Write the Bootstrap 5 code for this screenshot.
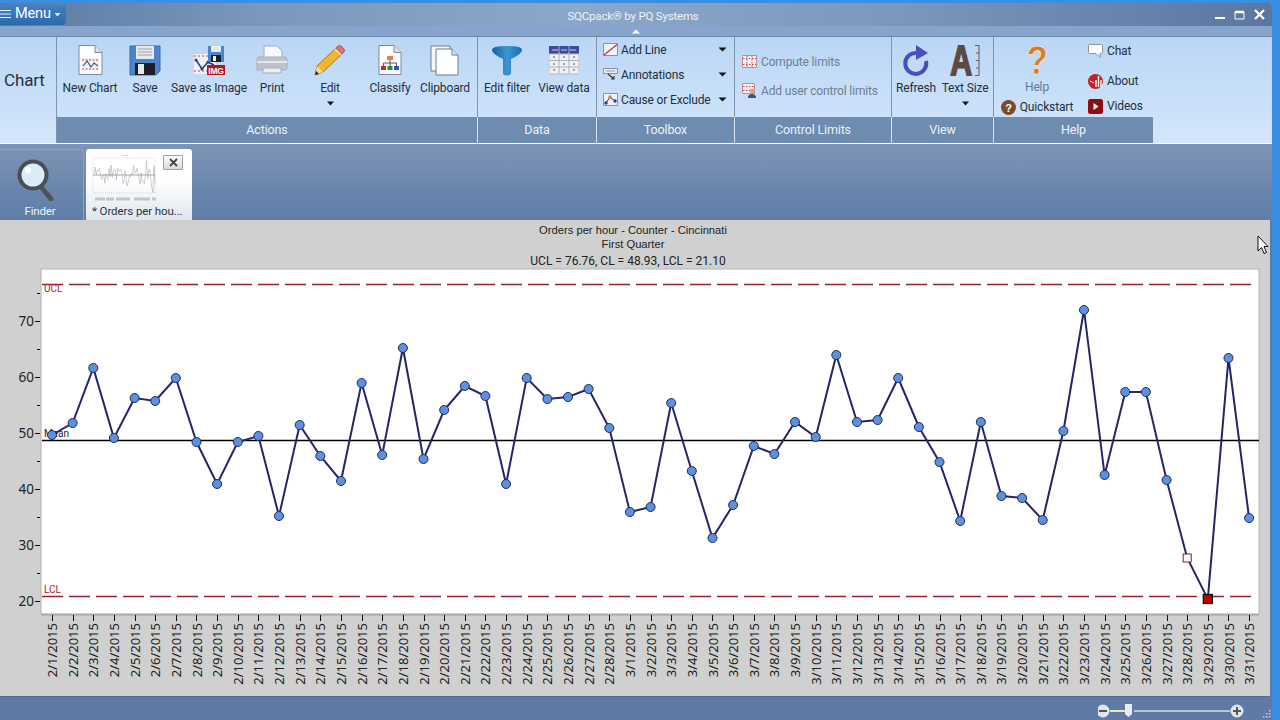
<!DOCTYPE html>
<html lang="en"><head><meta charset="utf-8"><title>SQCpack</title>
<link href="https://cdn.jsdelivr.net/npm/bootstrap@5.3.0/dist/css/bootstrap.min.css" rel="stylesheet">
<style>
html,body{height:720px;overflow:hidden}
body{background:#3b8fe3;font-family:Roboto,"Noto Sans",sans-serif;font-size:12px;letter-spacing:-.15px;color:#22303f;padding-top:3px}
.win{width:1272px;height:717px;border-top-right-radius:5px;overflow:hidden;background:#5f7ba5}
.ttl{height:23px;background:linear-gradient(90deg,#587aa3 0,#7b97bb 20%,#8ba7c9 45%,#7c98bd 70%,#5b76a1 100%);position:relative}
.menu-b{width:66px;height:20px;background:linear-gradient(#3f80c8,#2d6aa8);border-radius:0 0 4px 0;color:#fff;font-size:14.5px;line-height:18px;gap:3px;margin-top:2px;padding-bottom:2px}
.ttl-t{color:#eef4fb;font-size:11.5px;left:0;width:1266px;top:5px;text-align:center;letter-spacing:-.2px}
.wbtns{gap:9px;padding-right:7px}
.strip{height:11px;background:#86a4cc;border-bottom:1px solid #6c86a5;text-align:center;line-height:0}
.rib{height:106px;background:linear-gradient(#bad6f5,#d3e6fb)}
.tabn{width:57px;border-right:1px solid #7e95ad;font-size:17px;line-height:87px;padding-left:4px;color:#26323e}
.grp{border-right:1px solid #7e95ad}
.grp-b{height:80px}
.grp-f{height:26px;background:#6e8cb0;color:#eaf1f8;text-align:center;line-height:26px;font-size:12.5px;border-right:1px solid #d8e3ef;margin-right:-1px}
.g1{width:421px}.g2{width:119px}.g3{width:138px}.g4{width:157px}.g5{width:102px}.g6{width:159px;border-right:0}
.g6 .grp-f{border-right:0;margin-right:0}
.rb{padding-top:8px;height:80px;flex:none}
.rb-i{height:36px;display:block}
.rb-t{line-height:14px;white-space:nowrap}
.car{display:block;margin-top:6px}
.w66{width:66px}.w44{width:44px}.w84{width:84px}.w42{width:42px}.w74{width:74px}.w46{width:46px}.w64{width:64px}.w58{width:58px}.w56{width:56px}.w48{width:48px}.w50{width:50px}
.g3 .grp-b{padding:0 0 0 6px}
.tl{height:25px;gap:3px;white-space:nowrap}
.tl b{font-weight:400;flex:1}
.g4 .tl{height:29px;color:#6d8095;gap:4px}
.g4 .grp-b{padding:10px 0 0 7px}
.hp{color:#5f7a97}
.bigi{overflow:visible}
.tabs{height:77px;background:linear-gradient(#7d94b6,#5f7da7);border-top:1px solid #fff;padding-top:5px;gap:2px}
.tb1{width:84px;border:1px solid #8ea3bf;border-bottom:0;border-left:0;border-radius:0 4px 0 0;color:#edf3fa;position:relative}
.tb2{width:106px;background:linear-gradient(#fff 45%,#dfe5ee);border-radius:3px 3px 0 0;position:relative;color:#2a3542}
.tb-l{position:absolute;bottom:2px;left:-3px;right:0;text-align:center;white-space:nowrap;font-size:11.5px;line-height:14px}
.tb2 .tb-l{text-align:left;left:6px;letter-spacing:-.1px}
.xb{position:absolute;left:77px;top:6px;width:20px;height:15px;border:1px solid #9aa3ad;background:linear-gradient(#fdfdfd,#d7dbe0);border-radius:1px;padding:0;line-height:0}
.view{height:477px;background:#d0d0d0;width:1270px;position:relative;border-bottom:1px solid #54698a;letter-spacing:0}
.stat{height:22px;position:relative}
.sld{position:absolute;left:1098px;top:6px}
.cursor{position:absolute;left:1257px;top:15px}
.chart{display:block}
.ct{font-family:"Liberation Sans",Arial,sans-serif;fill:#222}
.nt{font-family:"Noto Sans",sans-serif}
</style></head><body>
<div class="win d-flex flex-column">
 <div class="ttl d-flex align-items-start justify-content-between flex-shrink-0">
  <div class="menu-b d-flex align-items-center position-relative"><svg width="12" height="12" viewBox="0 0 12 12"><path d="M0 2.500h11M0 6h11M0 9.500h11" stroke="#e6eef8" stroke-width="1"/></svg><span>Menu</span><svg width="7" height="5" viewBox="0 0 7 5"><path d="M.5 1h6L3.500 4.500z" fill="#dfeaf6"/></svg></div>
  <div class="ttl-t position-absolute">SQCpack® by PQ Systems</div>
  <div class="wbtns d-flex align-items-center position-relative" style="height:23px">
   <svg width="10" height="10" viewBox="0 0 10 10"><path d="M0 8h10" stroke="#fff" stroke-width="2"/></svg>
   <svg width="11" height="10" viewBox="0 0 11 10"><path d="M1 2h9v7H1z" fill="none" stroke="#fff"/><path d="M1 2h9" stroke="#fff" stroke-width="2.500"/></svg>
   <svg width="11" height="11" viewBox="0 0 11 11"><path d="M1 1l9 9M10 1l-9 9" stroke="#fff" stroke-width="2.200"/></svg>
  </div>
 </div>
 <div class="strip flex-shrink-0"><svg width="10" height="5" viewBox="0 0 10 5" style="margin-top:3px"><path d="M1 4.500h8L5 .5z" fill="#fff"/></svg></div>
 <div class="rib d-flex flex-shrink-0">
  <div class="tabn">Chart</div>
  <div class="grp g1 d-flex flex-column">
   <div class="grp-b d-flex">
    <div class="rb w66 text-center"><svg class="rb-i mx-auto" width="30" height="36" viewBox="0 0 30 36"><path d="M4 .5h16l7 7v22H4z" fill="#fff" stroke="#7d8a99"/><path d="M20 .5v7h7" fill="#dbe2ea" stroke="#7d8a99"/><path d="M7 13h17v12H7z" fill="#f1f3f7"/><path d="M8 21l4-5 4 6 3-4 4 3" fill="none" stroke="#36558f" stroke-width="1.200"/><path d="M7 15h17M7 24h17" stroke="#c9414c" stroke-dasharray="2 1.500"/></svg><div class="rb-t">New Chart</div></div>
    <div class="rb w44 text-center"><svg class="rb-i mx-auto" width="32" height="36" viewBox="0 0 32 36"><path d="M1 1h30v25l-4 4H1z" fill="#4b84cc" stroke="#3a6aa8"/><path d="M7 1h18v13H7z" fill="#e6e9ee"/><path d="M9 4h14M9 7h14M9 10h14" stroke="#9aa3ad"/><path d="M6 18h20v12H6z" fill="#1e1f24"/><path d="M9 19h6v10H9z" fill="#e6e9ee"/></svg><div class="rb-t">Save</div></div>
    <div class="rb w84 text-center"><svg class="rb-i mx-auto" width="32" height="36" viewBox="0 0 32 36"><path d="M1 9h22v20H1z" fill="#eef1f6"/><path d="M1 11h20M1 26h16" stroke="#c9414c" stroke-dasharray="2 2"/><path d="M3 15l6 9 6-7 6 3" fill="none" stroke="#2b3f7a" stroke-width="1.600"/><circle cx="3" cy="15" r="1.500" fill="#2b3f7a"/><circle cx="9" cy="24" r="1.500" fill="#2b3f7a"/><circle cx="15" cy="17" r="1.500" fill="#2b3f7a"/><path d="M15 1h16v16H15z" fill="#4b84cc"/><path d="M18 1h10v6H18z" fill="#e6e9ee"/><path d="M18 10h10v7H18z" fill="#1e1f24"/><path d="M20 11h3v5h-3z" fill="#fff"/><path d="M14 20h18v10H14z" fill="#b5161e"/><text x="23" y="28.500" text-anchor="middle" font-size="8.500" font-weight="700" fill="#fff" font-family="Liberation Sans">IMG</text></svg><div class="rb-t">Save as Image</div></div>
    <div class="rb w42 text-center"><svg class="rb-i mx-auto" width="32" height="36" viewBox="0 0 32 36"><path d="M8 1h13l5 5v9H8z" fill="#f7f8fa" stroke="#a4adb7"/><path d="M1 14q0-2 2-2h26q2 0 2 2v9q0 2-2 2H1z" fill="#bcc3cb" stroke="#a9b0b9"/><path d="M1 17h30" stroke="#e3e6ea" stroke-width="2"/><path d="M7 23h18v5H7z" fill="#eceef1" stroke="#a4adb7"/></svg><div class="rb-t">Print</div></div>
    <div class="rb w74 text-center"><svg class="rb-i mx-auto" width="32" height="36" viewBox="0 0 32 36"><path d="M24 1l6 6L9 27l-8 3 2-9z" fill="#f2b52d" stroke="#a8781a"/><path d="M21 4l6 6" stroke="#fbe28a" stroke-width="2"/><path d="M24 1q2-1 3 0l3 3q1 1 0 3l-2 2-6-6z" fill="#e5707a" stroke="#b7545c"/><path d="M3 21l6 6-8 3z" fill="#eed9b0"/><path d="M2 26l3 3-4 1z" fill="#222"/></svg><div class="rb-t">Edit</div><svg class="car mx-auto" width="9" height="5" viewBox="0 0 9 5"><path d="M1 .5h7L4.500 4.500z" fill="#111"/></svg></div>
    <div class="rb w46 text-center"><svg class="rb-i mx-auto" width="26" height="36" viewBox="0 0 26 36"><path d="M2 .5h15l7 7v22H2z" fill="#fff" stroke="#7d8a99"/><path d="M17 .5v7h7" fill="#dbe2ea" stroke="#7d8a99"/><path d="M10 11h6v4h-6z" fill="#e0814a"/><path d="M13 15v3M6.500 21v-3h13v3M13 18v3" fill="none" stroke="#555"/><path d="M4 21h5v4H4z" fill="#c42b2b"/><path d="M10.500 21h5v4h-5z" fill="#2d8a3c"/><path d="M17 21h5v4h-5z" fill="#2858b8"/></svg><div class="rb-t">Classify</div></div>
    <div class="rb w64 text-center"><svg class="rb-i mx-auto" width="30" height="36" viewBox="0 0 30 36"><path d="M1 1h19v25H1z" fill="#f5f7fa" stroke="#6f7c8b"/><path d="M6 4h16l6 6v20H6z" fill="#fff" stroke="#6f7c8b"/><path d="M22 4v6h6" fill="#dbe2ea" stroke="#6f7c8b"/></svg><div class="rb-t">Clipboard</div></div>
   </div>
   <div class="grp-f">Actions</div>
  </div>
  <div class="grp g2 d-flex flex-column">
   <div class="grp-b d-flex">
    <div class="rb w58 text-center"><svg class="rb-i mx-auto" width="32" height="36" viewBox="0 0 32 36"><defs><linearGradient id="fg" x1="0" x2="1"><stop offset="0" stop-color="#14619f"/><stop offset=".5" stop-color="#3d95d6"/><stop offset="1" stop-color="#1a6fb0"/></linearGradient></defs><path d="M1 5q0-4 15-4t15 4q0 4-11 9v15q-4 3-8 0V14Q1 9 1 5z" fill="url(#fg)"/></svg><div class="rb-t">Edit filter</div></div>
    <div class="rb w56 text-center"><svg class="rb-i mx-auto" width="30" height="36" viewBox="0 0 30 36"><path d="M0 1h30v8H0z" fill="#3b4a9c"/><path d="M3 5h6M12 5h6M21 5h6" stroke="#c9d0ea"/><path d="M0 9h30v20H0z" fill="#eef0f3" stroke="#b5bbc3"/><path d="M10 1v28M20 1v28M0 15.500h30M0 22h30" stroke="#aeb5be"/><path d="M4 12h2M14 12h2M24 12h2M4 19h2M14 19h2M24 19h2M4 25h2M14 25h2M24 25h2" stroke="#555"/></svg><div class="rb-t">View data</div></div>
   </div>
   <div class="grp-f">Data</div>
  </div>
  <div class="grp g3 d-flex flex-column">
   <div class="grp-b">
    <div class="tl d-flex align-items-center"><svg width="15" height="13" viewBox="0 0 15 13"><path d="M.5.5h14v12H.5z" fill="#eef3fa" stroke="#8793a1"/><path d="M1 12L14 1.500" stroke="#c3303c" stroke-width="1.200"/></svg><b>Add Line</b><svg width="9" height="5" viewBox="0 0 9 5" style="margin-right:7px"><path d="M.5.500h8L4.500 4.500z" fill="#111"/></svg></div>
    <div class="tl d-flex align-items-center"><svg width="15" height="13" viewBox="0 0 15 13"><path d="M.5.5h14v5H.5z" fill="#e9edf2" stroke="#8793a1"/><path d="M3 3h9" stroke="#999"/><path d="M5 6l6 5M11 8v3H8" fill="none" stroke="#333" stroke-width="1.200"/></svg><b>Annotations</b><svg width="9" height="5" viewBox="0 0 9 5" style="margin-right:7px"><path d="M.5.500h8L4.500 4.500z" fill="#111"/></svg></div>
    <div class="tl d-flex align-items-center"><svg width="15" height="13" viewBox="0 0 15 13"><path d="M.5.5h14v12H.5z" fill="#eef3fa" stroke="#8793a1"/><path d="M3 10l4-6 5 4" fill="none" stroke="#333"/><circle cx="3" cy="10" r="1.700" fill="#2a3a8a"/><circle cx="7" cy="4" r="1.700" fill="#d08a2a"/><circle cx="12" cy="8" r="1.700" fill="#2a3a8a"/></svg><b>Cause or Exclude</b><svg width="9" height="5" viewBox="0 0 9 5" style="margin-right:7px"><path d="M.5.500h8L4.500 4.500z" fill="#111"/></svg></div>
   </div>
   <div class="grp-f">Toolbox</div>
  </div>
  <div class="grp g4 d-flex flex-column">
   <div class="grp-b">
    <div class="tl d-flex align-items-center"><svg width="15" height="13" viewBox="0 0 15 13"><path d="M.5.5h14v12H.5z" fill="#f3f3f3" stroke="#c48a8a"/><path d="M1 3.500h13M1 9.500h13M5 1v11M10 1v11" stroke="#c9414c" stroke-dasharray="1.500 1.500"/></svg><span>Compute limits</span></div>
    <div class="tl d-flex align-items-center"><svg width="15" height="15" viewBox="0 0 15 15"><path d="M.5.5h12v10H.5z" fill="#f3f3f3" stroke="#c48a8a"/><path d="M1 3.500h11M1 7.500h11" stroke="#c9414c" stroke-dasharray="1.500 1.500"/><circle cx="10" cy="8" r="2.500" fill="#e2a86a"/><path d="M6 15q0-4 4-4t4 4z" fill="#33528f"/></svg><span>Add user control limits</span></div>
   </div>
   <div class="grp-f">Control Limits</div>
  </div>
  <div class="grp g5 d-flex flex-column">
   <div class="grp-b d-flex">
    <div class="rb w48 text-center"><svg class="rb-i mx-auto" width="28" height="36" viewBox="0 0 28 36"><path d="M15 8a10.500 10.500 0 1 0 9 8" fill="none" stroke="#4a4fb8" stroke-width="4"/><path d="M14 0l12 8-12 7z" fill="#4a4fb8"/></svg><div class="rb-t">Refresh</div></div>
    <div class="rb w50 text-center"><svg class="rb-i mx-auto bigi" width="32" height="36" viewBox="0 0 32 36"><text transform="translate(12 30) scale(.72 1)" text-anchor="middle" font-size="42" font-weight="700" fill="#5a4a42" stroke="#5a4a42" stroke-width="1.800" font-family="Liberation Sans">A</text><path d="M26 .5h4v30h-4M27 8h3M27 15.500h3M27 23h3" fill="none" stroke="#6b5d55"/></svg><div class="rb-t">Text Size</div><svg class="car mx-auto" width="9" height="5" viewBox="0 0 9 5"><path d="M1 .5h7L4.500 4.500z" fill="#111"/></svg></div>
   </div>
   <div class="grp-f">View</div>
  </div>
  <div class="grp g6 d-flex flex-column">
   <div class="grp-b d-flex">
    <div class="d-flex flex-column align-items-center" style="width:86px">
     <div class="text-center" style="height:34px;padding-top:8px"><svg class="bigi" width="26" height="32" viewBox="0 0 26 32"><text transform="translate(13 29) scale(.85 1)" text-anchor="middle" font-size="41" font-weight="700" fill="#e07a20" stroke="#fff" stroke-width=".5" font-family="Liberation Sans">?</text></svg></div>
     <div class="hp" style="margin-top:8px;line-height:16px">Help</div>
     <div class="d-flex align-items-center gap-1" style="margin-top:3px;height:18px"><svg width="15" height="15" viewBox="0 0 15 15"><circle cx="7.500" cy="7.500" r="7.500" fill="#7b4a2a"/><text x="7.500" y="11.500" text-anchor="middle" font-size="11" font-weight="700" fill="#fff" font-family="Liberation Sans">?</text></svg><span>Quickstart</span></div>
    </div>
    <div class="flex-grow-1 ps-2">
     <div class="d-flex align-items-center gap-1" style="height:14px;margin-top:7px"><svg width="15" height="14" viewBox="0 0 15 14"><path d="M1.500.5h12q1 0 1 1v7q0 1-1 1H12v4l-4-4H1.500q-1 0-1-1v-7q0-1 1-1z" fill="#fff" stroke="#8793a1"/></svg><span>Chat</span></div>
     <div class="d-flex align-items-center gap-1" style="height:16px;margin-top:15px"><svg width="15" height="15" viewBox="0 0 15 15"><circle cx="7.500" cy="7.500" r="7.500" fill="#c4202a"/><path d="M8 13V6M10.500 13V2M13 13V6" stroke="#fff" stroke-width="1.400"/><path d="M2 7l4 2" stroke="#fff"/></svg><span>About</span></div>
     <div class="d-flex align-items-center gap-1" style="height:16px;margin-top:9px"><svg width="15" height="15" viewBox="0 0 15 15"><rect width="15" height="15" rx="2.500" fill="#8d0d13"/><path d="M5.500 4l5 3.500-5 3.500z" fill="#fff"/></svg><span>Videos</span></div>
    </div>
   </div>
   <div class="grp-f">Help</div>
  </div>
 </div>
 <div class="tabs d-flex flex-shrink-0">
  <div class="tb1"><svg class="d-block" style="margin:7px 0 0 16px" width="38" height="44" viewBox="0 0 38 44"><path d="M26 31l9 11" stroke="#4d5359" stroke-width="5" stroke-linecap="round"/><circle cx="17" cy="18" r="13.500" fill="#d9ecf8" stroke="#4b4f55" stroke-width="4"/><circle cx="12" cy="13" r="3" fill="#fff"/></svg><div class="tb-l">Finder</div></div>
  <div class="tb2"><svg class="d-block" style="margin:4px 0 0 6px" width="66" height="50" id="thumb" viewBox="0 0 66 50"></svg><button class="xb" type="button" aria-label="Close"><svg width="9" height="9" viewBox="0 0 9 9"><path d="M1 1l7 7M8 1L1 8" stroke="#444" stroke-width="1.800"/></svg></button><div class="tb-l">* Orders per hou...</div></div>
 </div>
 <div class="view flex-shrink-0">
  <svg class="chart" id="ch" width="1270" height="476" viewBox="0 220 1270 476"></svg>
  <svg class="cursor" width="12" height="20" viewBox="0 0 12 20"><path d="M1 1v15l3.500-3.500 2.500 6 2.500-1-2.500-6H11z" fill="#fff" stroke="#111"/></svg>
 </div>
 <div class="stat flex-grow-1">
  <svg class="sld" width="150" height="16" viewBox="1098 704 150 16"><path d="M1110 712h16" stroke="#ece9a8" stroke-width="2"/><path d="M1134 712h96" stroke="#b9c6d6" stroke-width="2"/><circle cx="1103" cy="712" r="6.500" fill="#dfe5ec"/><path d="M1099 712h8" stroke="#555" stroke-width="2"/><path d="M1125 705h7v10l-3.500 3-3.500-3z" fill="#e8ecf0"/><circle cx="1237" cy="712" r="6.500" fill="#dfe5ec"/><path d="M1233 712h8M1237 708v8" stroke="#555" stroke-width="2"/></svg>
  <svg class="position-absolute" style="right:1px;bottom:2px" width="9" height="9" viewBox="0 0 9 9"><path d="M7 1h1.500v1.500H7zM4 4h1.500v1.500H4zM7 4h1.500v1.500H7zM1 7h1.500v1.500H1zM4 7h1.500v1.500H4zM7 7h1.500v1.500H7z" fill="#c8d3e2"/></svg>
 </div>
</div>
<script>
var ys=[435,423,368,438,398,401,378,442,484,442,436,516,425,456,481,383,455,348,459,410,386,396,484,378,399,397,389,428,512,507,403,471,538,505,446,454,422,437,355,422,420,378,427,462,521,422,496,498,520,431,310,475,392,392,480,558,599,358,518];
function X(i){return 52+i*20.64}
var s='';
s+='<text class="ct" x="633" y="234" text-anchor="middle" font-size="11.200">Orders per hour - Counter - Cincinnati</text>';
s+='<text class="ct" x="633" y="248" text-anchor="middle" font-size="11.200">First Quarter</text>';
s+='<text x="628" y="265" text-anchor="middle" font-size="12" fill="#222">UCL = 76.76, CL = 48.93, LCL = 21.10</text>';
s+='<rect x="41" y="269" width="1218" height="345" fill="#fff"/><path d="M41 614V269H1259V614" fill="none" stroke="#b4b4b4"/><path d="M41 614.500H1259" stroke="#a8a8a8" stroke-width="2"/>';
[[70,321],[60,377],[50,433],[40,489],[30,545],[20,601]].forEach(function(t){
 s+='<text class="nt" x="34" y="'+(t[1]+5)+'" text-anchor="end" font-size="13.500" fill="#222">'+t[0]+'</text><path d="M35 '+t[1]+'.5h5" stroke="#111"/>';
 s+='<path d="M37 '+(t[1]-28)+'.5h3" stroke="#111"/>';
});
s+='<path d="M42 284.500H1256M42 596.500H1256" stroke="#97202e" stroke-width="1.500" stroke-dasharray="21 6"/>';
s+='<path d="M42 440.500H1259" stroke="#000" stroke-width="1.300"/>';
s+='<text x="44" y="292" font-size="10" fill="#a81c2c">UCL</text><text x="44" y="593" font-size="10" fill="#a81c2c">LCL</text><text x="44" y="437" font-size="10" fill="#222">Mean</text>';
s+='<polyline fill="none" stroke="#24266a" stroke-width="2" points="'+ys.map(function(y,i){return X(i).toFixed(1)+','+y}).join(' ')+'"/>';
ys.forEach(function(y,i){var x=X(i);
 if(i==55)s+='<rect x="'+(x-4)+'" y="'+(y-4)+'" width="8" height="8" fill="#fff" stroke="#8c1a22"/>';
 else if(i==56)s+='<rect x="'+(x-4.500)+'" y="'+(y-4.500)+'" width="9" height="9" fill="#c00008" stroke="#111" stroke-width="1.300"/>';
 else s+='<circle cx="'+x.toFixed(1)+'" cy="'+y+'" r="4.500" fill="#5d90e0" stroke="#1d2c55"/>';
});
var d=[];for(var i=1;i<=28;i++)d.push('2/'+i+'/2015');for(i=1;i<=31;i++)d.push('3/'+i+'/2015');
d.forEach(function(t,i){var x=X(i);
 s+='<path d="M'+Math.round(x)+'.5 615v6" stroke="#111"/>';
 s+='<text class="nt" transform="translate('+(x+5).toFixed(1)+',623) rotate(-90)" text-anchor="end" font-size="13" fill="#222">'+t+'</text>';
});
document.getElementById('ch').innerHTML=s;
var th='<text x="33" y="3" text-anchor="middle" font-size="2.500" fill="#999">Orders</text><path d="M1 5h62V40H1z" fill="none" stroke="#d98" stroke-width=".5" stroke-dasharray="1 1"/><path d="M1 22h62" stroke="#555" stroke-width=".5"/><polyline fill="none" stroke="#889" stroke-width=".4" points="'+ys.map(function(y,i){return (1+i*1.07).toFixed(1)+','+(22+(y-440)*.11).toFixed(1)}).join(' ')+'"/><path d="M3 46h10M14 46h8M24 46h14M42 46h16M60 46h4" stroke="#c4c4c4" stroke-width="3"/>';
document.getElementById('thumb').innerHTML=th;
</script>
<script src="https://cdn.jsdelivr.net/npm/bootstrap@5.3.0/dist/js/bootstrap.bundle.min.js"></script>
</body></html>
